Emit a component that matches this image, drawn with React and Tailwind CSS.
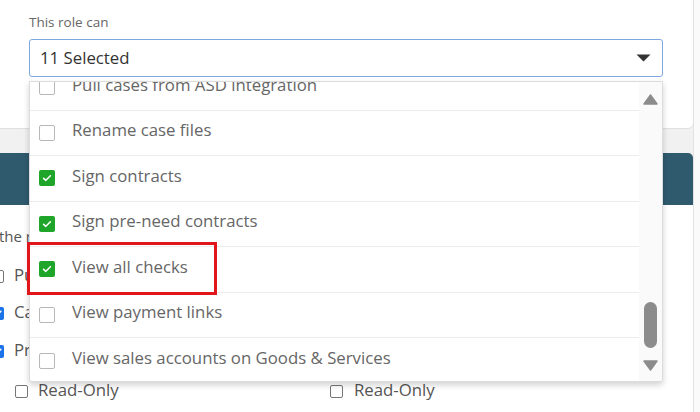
import React from "react";

const items = [
  { label: "Pull cases from ASD integration", checked: false },
  { label: "Rename case files", checked: false },
  { label: "Sign contracts", checked: true },
  { label: "Sign pre-need contracts", checked: true },
  { label: "View all checks", checked: true },
  { label: "View payment links", checked: false },
  { label: "View sales accounts on Goods & Services", checked: false },
];

function GreenBox({ checked }) {
  if (checked) {
    return (
      <span className="flex h-[16px] w-[16px] shrink-0 items-center justify-center rounded-[2px] bg-[#1fa52a]">
        <svg width="10" height="8" viewBox="0 0 10 8">
          <path d="M1.6 4.3 L3.9 6.3 L8.4 1.8" fill="none" stroke="#fff" strokeWidth="1.6" strokeLinecap="round" strokeLinejoin="round" />
        </svg>
      </span>
    );
  }
  return <span className="h-[16px] w-[16px] shrink-0 rounded-[2px] border border-[#b8b8b8] bg-white" />;
}

function BlueBox() {
  return (
    <span className="flex h-[13px] w-[13px] shrink-0 items-center justify-center rounded-[2px] bg-[#1a73e8]">
      <svg width="9" height="7" viewBox="0 0 10 8">
        <path d="M1.3 4.2 L3.8 6.5 L8.7 1.5" fill="none" stroke="#fff" strokeWidth="2" strokeLinecap="round" strokeLinejoin="round" />
      </svg>
    </span>
  );
}

function PlainBox() {
  return <span className="h-[13px] w-[13px] shrink-0 rounded-[2px] border border-[#767676] bg-white" />;
}

export default function App() {
  return (
    <div
      className="relative flex h-[412px] w-[700px] overflow-hidden bg-[#f1f1f1]"
      style={{ fontFamily: "'Open Sans', 'Liberation Sans', sans-serif" }}
    >
      <div className="flex w-[693px] shrink-0 flex-col">
        {/* Top card */}
        <div className="relative h-[128px] shrink-0 rounded-br-[5px] bg-white pl-[29px] pt-[12px] shadow-[0_1px_1px_rgba(0,0,0,0.08)]">
          <div className="text-[13.5px] leading-[20px] text-[#666]">This role can</div>
          <div className="mt-[7px] flex h-[38px] w-[634px] items-center justify-between rounded-[3px] border border-[#7ea6df] bg-white pl-[10px] pr-[11px]">
            <span className="text-[16.8px] text-[#333]">11 Selected</span>
            <svg width="15" height="8" viewBox="0 0 15 8">
              <path d="M0.5 0.5 H14.5 L7.5 7.5 Z" fill="#333" />
            </svg>
          </div>
        </div>
        {/* gap */}
        <div className="h-[25px] shrink-0" />
        {/* Teal header */}
        <div className="h-[52px] shrink-0 rounded-tr-[5px] bg-[#2f5a6d]" />
        {/* Body */}
        <div className="flex flex-1 flex-col bg-white text-[16.8px] text-[#555]">
          <div className="mt-[21px] -ml-[1px] h-[20px] text-[15px] leading-[20px]">the role's permissions</div>
          <div className="mt-[20px] flex h-[20px] items-center gap-[10px] -ml-[9px]">
            <PlainBox />
            <span className="pb-[2px]">Pull cases from ASD integration</span>
          </div>
          <div className="mt-[17px] flex h-[20px] items-center gap-[10px] -ml-[9px]">
            <BlueBox />
            <span className="pb-[2px]">Cancel contracts</span>
          </div>
          <div className="mt-[18px] flex h-[20px] items-center gap-[10px] -ml-[9px]">
            <BlueBox />
            <span className="pb-[2px]">Print documents</span>
          </div>
          <div className="mt-[20px] flex h-[20px] items-center">
            <div className="flex w-[330px] items-center gap-[10px] pl-[15px]">
              <PlainBox />
              <span className="pb-[2px]">Read-Only</span>
            </div>
            <div className="flex items-center gap-[11px]">
              <PlainBox />
              <span className="pb-[2px]">Read-Only</span>
            </div>
          </div>
        </div>
      </div>
      {/* right strip */}
      <div className="flex-1 border-l border-[#e2e2e2] bg-[#fafafa]" />

      {/* Dropdown list overlay */}
      <div className="absolute left-[29px] top-[81px] flex h-[301px] w-[634px] overflow-hidden rounded-b-[3px] border border-[#dcdcdc] bg-white shadow-[0_3px_6px_rgba(0,0,0,0.18)]">
        <div className="flex-1 overflow-hidden">
          <div className="-mt-[17px]">
            {items.map((it, i) => (
              <div
                key={it.label}
                className={
                  "flex h-[45.5px] items-center gap-[17px] pl-[9px] " +
                  (i < items.length - 1 ? "border-b border-[#ececec]" : "")
                }
              >
                <GreenBox checked={it.checked} />
                <span className="pb-[6px] text-[16.8px] text-[#666]">{it.label}</span>
              </div>
            ))}
          </div>
        </div>
        <div className="flex w-[23px] shrink-0 flex-col items-center bg-[#fafafa] pb-[10px] pt-[12px]">
          <svg width="15" height="11" viewBox="0 0 15 11">
            <path d="M7.5 1 L14 10 H1 Z" fill="#8c8c8c" stroke="#8c8c8c" strokeWidth="1.5" strokeLinejoin="round" />
          </svg>
          <div className="flex-1" />
          <div className="h-[46px] w-[13px] rounded-[7px] bg-[#8c8c8c]" />
          <div className="h-[12px]" />
          <svg width="15" height="11" viewBox="0 0 15 11">
            <path d="M1 1 H14 L7.5 10 Z" fill="#8c8c8c" stroke="#8c8c8c" strokeWidth="1.5" strokeLinejoin="round" />
          </svg>
        </div>
      </div>

      {/* Red highlight */}
      <div className="pointer-events-none absolute left-[27px] top-[242px] h-[53px] w-[190px] border-[3px] border-[#e0161b]" />
    </div>
  );
}
